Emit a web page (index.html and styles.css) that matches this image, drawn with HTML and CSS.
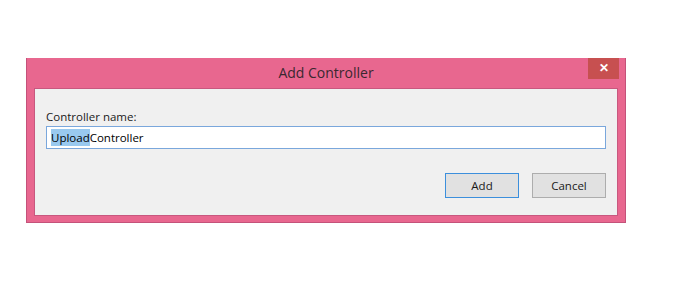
FILE: index.html
```html
<!DOCTYPE html>
<html lang="en">

<head>
  <meta charset="UTF-8" />
  <title>Add Controller</title>
  <link rel="stylesheet" href="styles.css">
</head>

<body>

  <!-- Dialog window -->
  <div class="window">
    <div class="titlebar">
      <span class="title">Add Controller</span>
      <button class="close-btn">&#x2715;</button>
    </div>

    <div class="client">
      <label class="field-label" for="ctrlName">Controller name:</label>
      <div class="field-input" id="ctrlName"><span class="sel">Upload</span>Controller</div>

      <div class="buttons">
        <button class="btn btn-default">Add</button>
        <button class="btn">Cancel</button>
      </div>
    </div>
  </div>

</body>

</html>
```
FILE: styles.css
```css
body {
  margin: 0;
  background-color: #fff;
  font-family: 'Open Sans', 'Liberation Sans', sans-serif;
}

/* Window frame */
.window {
  box-sizing: border-box;
  width: 600px;
  height: 165px;
  margin: 58px 0 0 26px;
  background-color: #e8678f;
  border: 1px solid #c4527a;
  border-top: none;
  display: flex;
  flex-direction: column;
  padding: 0 7px 6px 7px;
}

.titlebar {
  height: 30px;
  display: flex;
  align-items: center;
  justify-content: center;
  position: relative;
}

.title {
  font-size: 14px;
  color: #3a2830;
  margin-top: -1px;
}

.close-btn {
  position: absolute;
  top: 0;
  right: -1px;
  width: 31px;
  height: 21px;
  border: none;
  background-color: #c75050;
  color: #fff;
  font-size: 12px;
  font-weight: 700;
  padding: 0;
  line-height: 21px;
}

/* Client area */
.client {
  flex: 1;
  background-color: #f0f0f0;
  border: 1px solid #c8587f;
  padding: 20px 11px 0 11px;
  display: flex;
  flex-direction: column;
}

.field-label {
  font-size: 11.5px;
  color: #1a1a1a;
  line-height: 16px;
  height: 17px;
}

.field-input {
  box-sizing: border-box;
  height: 23px;
  border: 1px solid #7aa7dc;
  background-color: #fff;
  font-size: 11.5px;
  color: #000;
  padding: 3px 0 0 4px;
  line-height: 15px;
}

.sel {
  background-color: #99c9ef;
  padding: 1px 0;
}

.buttons {
  display: flex;
  justify-content: flex-end;
  gap: 13px;
  margin-top: 24px;
  padding-right: 0;
}

.btn {
  width: 74px;
  height: 25px;
  background-color: #e1e1e1;
  border: 1px solid #adadad;
  font-family: 'Open Sans', 'Liberation Sans', sans-serif;
  font-size: 11.5px;
  color: #1a1a1a;
  padding: 0;
}

.btn-default {
  border-color: #3c8fdc;
}
```
